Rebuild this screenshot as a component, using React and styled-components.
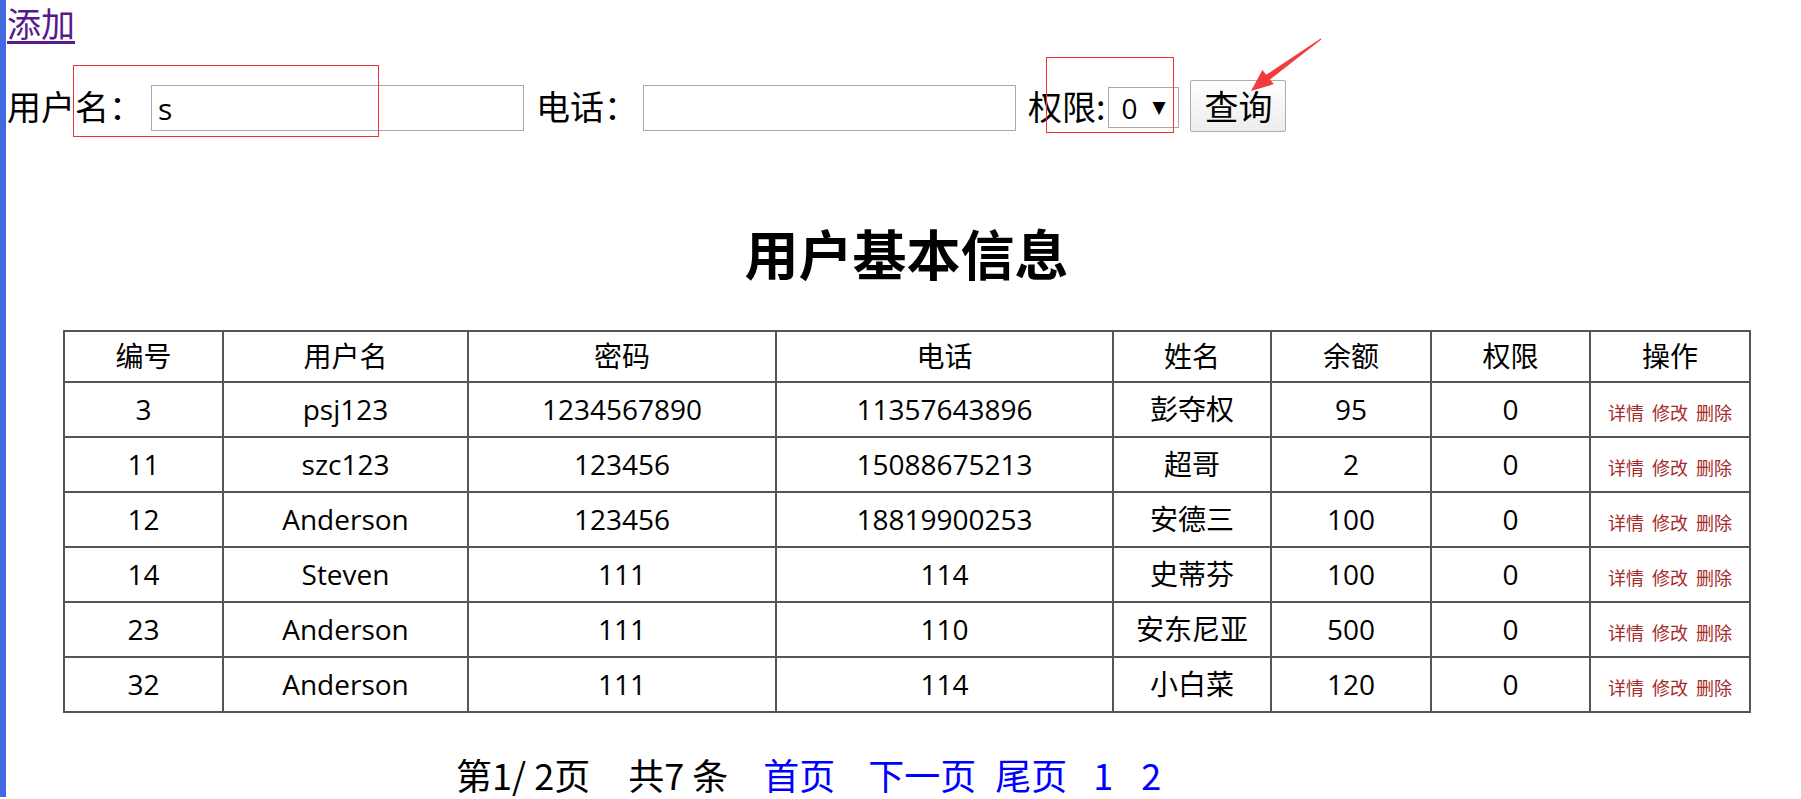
import React from "react";
import styled, { createGlobalStyle } from "styled-components";

const GlobalStyle = createGlobalStyle`
  html, body {
    margin: 0;
    padding: 0;
    background: #fff;
  }
  body {
    font-family: "Open Sans", "Noto Sans CJK SC", sans-serif;
    color: #000;
  }
`;

const Page = styled.div`
  position: relative;
  height: 799px;
  border-left: 6px solid #4169e1;
  padding-left: 1px;
  box-sizing: border-box;
`;

const AddLink = styled.a`
  display: block;
  width: max-content;
  font-family: "Noto Sans CJK SC", sans-serif;
  font-size: 34px;
  line-height: 49px;
  margin-top: -2px;
  color: #551a8b;
  text-decoration: underline;
  text-underline-offset: 4px;
  cursor: pointer;
`;

const SearchForm = styled.form`
  display: flex;
  align-items: center;
  height: 52px;
  margin-top: 33px;
  font-size: 34px;
`;

const Field = styled.div`
  display: flex;
  align-items: center;
  gap: ${p => p.$gap}px;
  margin-right: ${p => p.$after}px;
`;

const Label = styled.span`
  font-family: "Noto Sans CJK SC", sans-serif;
  line-height: 1;
  white-space: nowrap;
`;

const TextInput = styled.input`
  width: 373px;
  height: 46px;
  margin-top: 4px;
  box-sizing: border-box;
  border: 1px solid #a9a9a9;
  padding: 0 6px;
  font-family: "Open Sans", sans-serif;
  font-size: 30px;
  outline: none;
`;

const SelectBox = styled.label`
  display: inline-flex;
  align-items: center;
  width: 71px;
  height: 41px;
  margin-top: 3px;
  box-sizing: border-box;
  border: 1px solid #a9a9a9;
  padding-left: 12px;
`;

const Select = styled.select`
  appearance: none;
  width: 20px;
  border: none;
  background: transparent;
  padding: 0;
  font-family: "Open Sans", sans-serif;
  font-size: 28px;
  outline: none;
`;

const Caret = styled.span`
  margin-left: 11px;
  font-family: "DejaVu Sans", sans-serif;
  font-size: 17px;
  line-height: 1;
`;

const QueryButton = styled.button`
  width: 96px;
  height: 52px;
  box-sizing: border-box;
  border: 1px solid #adadad;
  border-radius: 2px;
  background: linear-gradient(#ffffff, #ececec);
  font-family: "Noto Sans CJK SC", sans-serif;
  font-size: 34px;
  line-height: 1;
  padding: 0;
  color: #000;
`;

const Title = styled.h1`
  margin: 88px 0 0 57px;
  width: 1685px;
  text-align: center;
  font-family: "Noto Sans CJK SC", sans-serif;
  font-size: 54px;
  font-weight: 700;
  line-height: 65px;
`;

const Table = styled.table`
  margin: 45px 0 0 56px;
  width: 1686px;
  table-layout: fixed;
  border-collapse: collapse;
  border: 2px solid #4a4a4a;
  font-size: 28px;
`;

const HeadRow = styled.tr`
  height: 51px;
`;

const BodyRow = styled.tr`
  height: 55px;
`;

const Cell = styled.td`
  border: 2px solid #555;
  text-align: center;
  vertical-align: middle;
  font-weight: 400;
  padding: 0;
  line-height: 1.2;
`;

const ActionLink = styled.a`
  font-family: "Noto Sans CJK SC", sans-serif;
  font-size: 18px;
  color: #a52a2a;
  margin: 0 4px;
  cursor: pointer;
`;

const Pager = styled.div`
  display: flex;
  align-items: center;
  margin: 35px 0 0 449px;
  font-family: "Noto Sans CJK SC", sans-serif;
  font-size: 36px;
  line-height: 52px;
`;

const PageText = styled.span`
  color: #000;
  white-space: pre;
  margin-right: ${p => p.$after || 0}px;
`;

const PageLink = styled.a`
  color: #0000ff;
  text-decoration: none;
  cursor: pointer;
  margin-right: ${p => p.$after || 0}px;
`;

const Mark = styled.div`
  position: absolute;
  left: ${p => p.$x}px;
  top: ${p => p.$y}px;
  width: ${p => p.$w}px;
  height: ${p => p.$h}px;
  border: 1px solid #ee3333;
  box-sizing: border-box;
  pointer-events: none;
`;

const ArrowSvg = styled.svg`
  position: absolute;
  left: 1234px;
  top: 36px;
  pointer-events: none;
`;

const columns = [159, 245, 308, 337, 158, 160, 159, 160];
const headers = ["编号", "用户名", "密码", "电话", "姓名", "余额", "权限", "操作"];

const users = [
  { id: 3, name: "psj123", pwd: "1234567890", tel: "11357643896", real: "彭夺权", money: 95, role: 0 },
  { id: 11, name: "szc123", pwd: "123456", tel: "15088675213", real: "超哥", money: 2, role: 0 },
  { id: 12, name: "Anderson", pwd: "123456", tel: "18819900253", real: "安德三", money: 100, role: 0 },
  { id: 14, name: "Steven", pwd: "111", tel: "114", real: "史蒂芬", money: 100, role: 0 },
  { id: 23, name: "Anderson", pwd: "111", tel: "110", real: "安东尼亚", money: 500, role: 0 },
  { id: 32, name: "Anderson", pwd: "111", tel: "114", real: "小白菜", money: 120, role: 0 },
];

function App() {
  return (
    <Page>
      <GlobalStyle />
      <AddLink>添加</AddLink>

      <SearchForm onSubmit={e => e.preventDefault()}>
        <Field $gap={8} $after={12}>
          <Label>用户名：</Label>
          <TextInput defaultValue="s" />
        </Field>
        <Field $gap={5} $after={12}>
          <Label>电话：</Label>
          <TextInput />
        </Field>
        <Field $gap={3} $after={11}>
          <Label>权限:</Label>
          <SelectBox>
            <Select defaultValue="0">
              <option value="0">0</option>
              <option value="1">1</option>
            </Select>
            <Caret>▼</Caret>
          </SelectBox>
        </Field>
        <QueryButton type="submit">查询</QueryButton>
      </SearchForm>

      <Title>用户基本信息</Title>

      <Table>
        <colgroup>
          {columns.map((w, i) => (
            <col key={i} style={{ width: w }} />
          ))}
        </colgroup>
        <thead>
          <HeadRow>
            {headers.map(h => (
              <Cell as="th" key={h}>{h}</Cell>
            ))}
          </HeadRow>
        </thead>
        <tbody>
          {users.map(u => (
            <BodyRow key={u.id}>
              <Cell>{u.id}</Cell>
              <Cell>{u.name}</Cell>
              <Cell>{u.pwd}</Cell>
              <Cell>{u.tel}</Cell>
              <Cell>{u.real}</Cell>
              <Cell>{u.money}</Cell>
              <Cell>{u.role}</Cell>
              <Cell>
                <ActionLink>详情</ActionLink>
                <ActionLink>修改</ActionLink>
                <ActionLink>删除</ActionLink>
              </Cell>
            </BodyRow>
          ))}
        </tbody>
      </Table>

      <Pager>
        <PageText $after={38}>第1/ 2页</PageText>
        <PageText $after={35}>共7 条</PageText>
        <PageLink $after={33}>首页</PageLink>
        <PageLink $after={19}>下一页</PageLink>
        <PageLink $after={26}>尾页</PageLink>
        <PageLink $after={28}>1</PageLink>
        <PageLink>2</PageLink>
      </Pager>

      <Mark $x={67} $y={67} $w={306} $h={72} />
      <Mark $x={1040} $y={59} $w={128} $h={76} />
      <ArrowSvg width="84" height="64" viewBox="0 0 84 64">
        <polygon
          points="11,57 33.8,50.1 30,45.4 81.3,5.4 80.7,4.6 26.2,40.8 22.4,36.1"
          fill="#f03c3c"
        />
      </ArrowSvg>
    </Page>
  );
}

export default App;
